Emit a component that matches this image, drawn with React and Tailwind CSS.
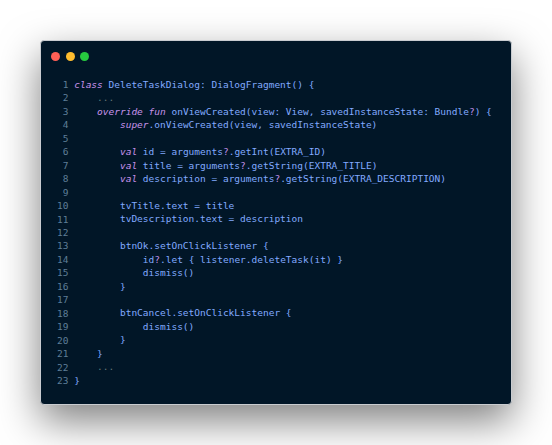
const K = ({ children }) => <span className="italic text-[#c792ea]">{children}</span>;
const Q = () => <span className="text-[#c792ea]">?</span>;
const D = () => <span className="text-[#637777]">...</span>;

const lines = [
  <><K>class</K> DeleteTaskDialog: DialogFragment() {"{"}</>,
  <>{"    "}<D /></>,
  <>{"    "}<K>override</K> <K>fun</K> onViewCreated(view: View, savedInstanceState: Bundle<Q />) {"{"}</>,
  <>{"        "}<K>super</K>.onViewCreated(view, savedInstanceState)</>,
  <></>,
  <>{"        "}<K>val</K> id = arguments<Q />.getInt(EXTRA_ID)</>,
  <>{"        "}<K>val</K> title = arguments<Q />.getString(EXTRA_TITLE)</>,
  <>{"        "}<K>val</K> description = arguments<Q />.getString(EXTRA_DESCRIPTION)</>,
  <></>,
  <>{"        "}tvTitle.text = title</>,
  <>{"        "}tvDescription.text = description</>,
  <></>,
  <>{"        "}btnOk.setOnClickListener {"{"}</>,
  <>{"            "}id<Q />.let {"{"} listener.deleteTask(it) {"}"}</>,
  <>{"            "}dismiss()</>,
  <>{"        "}{"}"}</>,
  <></>,
  <>{"        "}btnCancel.setOnClickListener {"{"}</>,
  <>{"            "}dismiss()</>,
  <>{"        "}{"}"}</>,
  <>{"    "}{"}"}</>,
  <>{"    "}<D /></>,
  <>{"}"}</>,
];

export default function App() {
  return (
    <div className="w-[552px] h-[445px] bg-white p-[40px]">
      <div className="w-[472px] h-[365px] bg-[#011627] rounded-[4px] border border-[#c9ccd0] shadow-[0_16px_40px_rgba(0,0,0,0.5)] flex flex-col">
        {/* window controls */}
        <div className="flex gap-[5.5px] pl-[10px] pt-[11px]">
          <div className="w-[9px] h-[9px] rounded-full bg-[#ff5f56]"></div>
          <div className="w-[9px] h-[9px] rounded-full bg-[#ffbd2e]"></div>
          <div className="w-[9px] h-[9px] rounded-full bg-[#27c93f]"></div>
        </div>

        {/* code */}
        <div className="mt-[17px] pl-[16px] flex font-['DejaVu_Sans_Mono',monospace] text-[9.5px] leading-[13.45px] whitespace-pre">
          <div className="text-right text-[#5f7e97] w-[11.5px]">
            {lines.map((_, i) => (
              <div key={i}>{i + 1}</div>
            ))}
          </div>
          <div className="pl-[5.7px] text-[#82aaff]">
            {lines.map((l, i) => (
              <div key={i} className="h-[13.45px]">{l}</div>
            ))}
          </div>
        </div>
      </div>
    </div>
  );
}
